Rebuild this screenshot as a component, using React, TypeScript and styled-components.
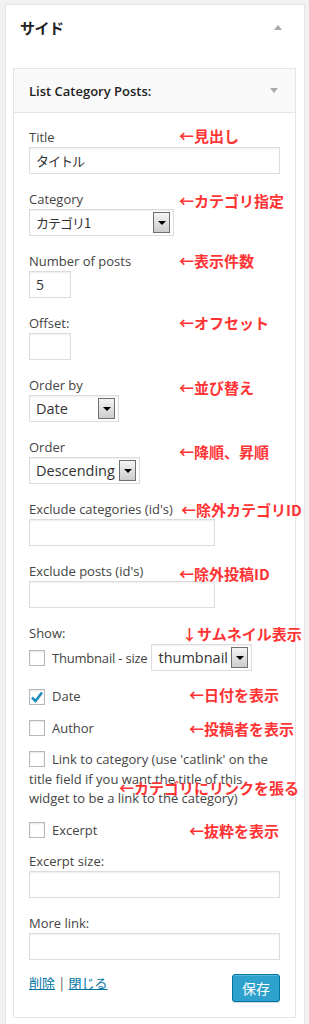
import React from "react";
import styled, { createGlobalStyle } from "styled-components";

const GlobalStyle = createGlobalStyle`
  html, body {
    margin: 0;
    padding: 0;
    background: #f1f1f1;
  }
  body {
    font-family: "Open Sans", "Noto Sans CJK JP", sans-serif;
    font-size: 13px;
    color: #444;
  }
`;

const Page = styled.div`
  padding: 4px 4px 0 5px;
`;

const Sidebar = styled.div`
  background: #fff;
  border: 1px solid #e5e5e5;
  box-shadow: 0 1px 1px rgba(0, 0, 0, 0.04);
  padding-bottom: 20px;
`;

const SidebarHead = styled.div`
  display: flex;
  align-items: center;
  justify-content: space-between;
  height: 44px;
  padding: 0 22px 0 14px;
  margin-bottom: 19px;
`;

const SidebarTitle = styled.h3`
  margin: 0;
  font-family: "Noto Sans CJK JP", sans-serif;
  font-size: 15px;
  font-weight: 700;
  color: #222;
  letter-spacing: -0.5px;
`;

const Arrow = styled.span<{ $up?: boolean }>`
  width: 0;
  height: 0;
  border-left: 4px solid transparent;
  border-right: 4px solid transparent;
  ${(p) => (p.$up ? "border-bottom: 5px solid #aaa;" : "border-top: 5px solid #aaa;")}
`;

const Widget = styled.div`
  margin: 0 8px 0 7px;
  border: 1px solid #e5e5e5;
  background: #fff;
`;

const WidgetHead = styled.div`
  display: flex;
  align-items: center;
  justify-content: space-between;
  height: 43px;
  padding: 0 17px 0 15px;
  background: #f9f9f9;
  border-bottom: 1px solid #e5e5e5;
`;

const WidgetTitle = styled.span`
  font-size: 13px;
  font-weight: 600;
  color: #222;
`;

const WidgetBody = styled.div`
  padding: 15px;
`;

const Field = styled.div<{ $mt?: number }>`
  position: relative;
  margin-top: ${(p) => p.$mt ?? 0}px;
  margin-bottom: 16px;
`;

const Label = styled.div`
  line-height: 18px;
  margin-bottom: 1px;
`;

const TextInput = styled.input<{ $w?: number; $jp?: boolean }>`
  display: block;
  box-sizing: border-box;
  width: ${(p) => (p.$w ? `${p.$w}px` : "100%")};
  height: 27px;
  margin: 0;
  padding: 0 6px;
  border: 1px solid #ddd;
  background: #fff;
  box-shadow: inset 0 1px 2px rgba(0, 0, 0, 0.07);
  font-family: ${(p) =>
    p.$jp ? '"Noto Sans CJK JP", sans-serif' : '"Open Sans", "Noto Sans CJK JP", sans-serif'};
  font-size: ${(p) => (p.$jp ? 13 : 14)}px;
  letter-spacing: ${(p) => (p.$jp ? -1 : 0)}px;
  color: #333;
  outline: none;
`;

const Jp = styled.span`
  font-family: "Noto Sans CJK JP", sans-serif;
  font-size: 13px;
  letter-spacing: -1px;
`;

const SelectBox = styled.div<{ $w: number }>`
  display: flex;
  align-items: center;
  box-sizing: border-box;
  flex: none;
  width: ${(p) => p.$w}px;
  height: 27px;
  padding: 0 3px 0 6px;
  border: 1px solid #ddd;
  background: #fff;
  box-shadow: inset 0 1px 2px rgba(0, 0, 0, 0.07);
`;

const SelectValue = styled.span`
  flex: 1;
  overflow: hidden;
  white-space: nowrap;
  font-size: 14.5px;
  color: #333;
`;

const SelectButton = styled.span`
  flex: none;
  display: flex;
  align-items: center;
  justify-content: center;
  box-sizing: border-box;
  width: 17px;
  height: 21px;
  border: 1px solid #6f6f6f;
  background: linear-gradient(#f4f4f4, #cdcdcd);
  &::after {
    content: "";
    margin-top: 1px;
    border-left: 4px solid transparent;
    border-right: 4px solid transparent;
    border-top: 4px solid #000;
  }
`;

const Note = styled.span<{ $x: number; $y: number }>`
  position: absolute;
  left: ${(p) => p.$x}px;
  top: ${(p) => p.$y}px;
  line-height: 18px;
  white-space: nowrap;
  font-family: "Noto Sans CJK JP", sans-serif;
  font-size: 15px;
  font-weight: 700;
  color: #ff3333;
`;

const ShowLabel = styled.div`
  line-height: 18px;
`;

const ThumbRow = styled.div`
  display: flex;
  align-items: center;
  height: 27px;
  margin-top: 2px;
`;

const CheckRow = styled.div<{ $mt: number }>`
  position: relative;
  margin-top: ${(p) => p.$mt}px;
  line-height: 19.5px;
`;

const Box = styled.span`
  display: inline-flex;
  align-items: center;
  justify-content: center;
  vertical-align: -3px;
  box-sizing: border-box;
  width: 16px;
  height: 16px;
  margin-right: 7px;
  border: 1px solid #b4b9be;
  background: #fff;
  box-shadow: inset 0 1px 2px rgba(0, 0, 0, 0.1);
  flex: none;
`;

const ThumbText = styled.span`
  margin-right: 4px;
  white-space: nowrap;
  letter-spacing: -0.2px;
`;

const Actions = styled.div`
  display: flex;
  align-items: flex-start;
  justify-content: space-between;
  margin-top: -2px;
`;

const Links = styled.div`
  line-height: 18px;
  font-family: "Noto Sans CJK JP", sans-serif;
  font-size: 13px;
  color: #555;
`;

const LinkText = styled.a`
  color: #0074a2;
  text-decoration: underline;
`;

const Sep = styled.span`
  margin: 0 5px;
`;

const SaveButton = styled.button`
  box-sizing: border-box;
  width: 48px;
  height: 28px;
  padding: 0;
  border: 1px solid #0074a2;
  border-radius: 3px;
  background: #2ea2cc;
  box-shadow: inset 0 1px 0 rgba(120, 200, 230, 0.5), 0 1px 0 rgba(0, 0, 0, 0.15);
  color: #fff;
  font-family: "Noto Sans CJK JP", sans-serif;
  font-size: 14px;
`;

const Checkbox = ({ checked }: { checked?: boolean }) => (
  <Box>
    {checked && (
      <svg width="14" height="14" viewBox="0 0 14 14">
        <path d="M2 7.5 L5.5 11 L12 2.5" fill="none" stroke="#1e8cbe" strokeWidth="2.6" />
      </svg>
    )}
  </Box>
);

const Select = ({ w, value }: { w: number; value: React.ReactNode }) => (
  <SelectBox $w={w}>
    <SelectValue>{value}</SelectValue>
    <SelectButton />
  </SelectBox>
);

const App = () => {
  return (
    <Page>
      <GlobalStyle />
      <Sidebar>
        <SidebarHead>
          <SidebarTitle>サイド</SidebarTitle>
          <Arrow $up />
        </SidebarHead>
        <Widget>
          <WidgetHead>
            <WidgetTitle>List Category Posts:</WidgetTitle>
            <Arrow />
          </WidgetHead>
          <WidgetBody>
            <Field>
              <Label>Title</Label>
              <TextInput $jp defaultValue="タイトル" />
              <Note $x={150} $y={-1}>←見出し</Note>
            </Field>
            <Field>
              <Label>Category</Label>
              <Select w={145} value={<Jp>カテゴリ1</Jp>} />
              <Note $x={150} $y={2}>←カテゴリ指定</Note>
            </Field>
            <Field>
              <Label>Number of posts</Label>
              <TextInput $w={42} defaultValue="5" />
              <Note $x={150} $y={0}>←表示件数</Note>
            </Field>
            <Field>
              <Label>Offset:</Label>
              <TextInput $w={42} defaultValue="" />
              <Note $x={150} $y={0}>←オフセット</Note>
            </Field>
            <Field>
              <Label>Order by</Label>
              <Select w={90} value="Date" />
              <Note $x={150} $y={3}>←並び替え</Note>
            </Field>
            <Field>
              <Label>Order</Label>
              <Select w={111} value="Descending" />
              <Note $x={150} $y={5}>←降順、昇順</Note>
            </Field>
            <Field>
              <Label>Exclude categories (id's)</Label>
              <TextInput $w={186} defaultValue="" />
              <Note $x={152} $y={1}>←除外カテゴリID</Note>
            </Field>
            <Field>
              <Label>Exclude posts (id's)</Label>
              <TextInput $w={186} defaultValue="" />
              <Note $x={150} $y={3}>←除外投稿ID</Note>
            </Field>
            <Field>
              <ShowLabel>Show:</ShowLabel>
              <Note $x={153} $y={1}>↓サムネイル表示</Note>
              <ThumbRow>
                <Checkbox />
                <ThumbText>Thumbnail - size</ThumbText>
                <Select w={101} value="thumbnail" />
              </ThumbRow>
              <CheckRow $mt={16}>
                <Checkbox checked />
                Date
                <Note $x={160} $y={-1}>←日付を表示</Note>
              </CheckRow>
              <CheckRow $mt={12}>
                <Checkbox />
                Author
                <Note $x={160} $y={1}>←投稿者を表示</Note>
              </CheckRow>
              <CheckRow $mt={12}>
                <Checkbox />
                Link to category (use 'catlink' on the title field if you want the title of this widget to be a
                link to the category)
                <Note $x={90} $y={29}>←カテゴリにリンクを張る</Note>
              </CheckRow>
              <CheckRow $mt={12}>
                <Checkbox />
                Excerpt
                <Note $x={160} $y={1}>←抜粋を表示</Note>
              </CheckRow>
            </Field>
            <Field $mt={-4}>
              <Label>Excerpt size:</Label>
              <TextInput defaultValue="" />
            </Field>
            <Field>
              <Label>More link:</Label>
              <TextInput defaultValue="" />
            </Field>
            <Actions>
              <Links>
                <LinkText href="#">削除</LinkText>
                <Sep>|</Sep>
                <LinkText href="#">閉じる</LinkText>
              </Links>
              <SaveButton>保存</SaveButton>
            </Actions>
          </WidgetBody>
        </Widget>
      </Sidebar>
    </Page>
  );
};

export default App;
